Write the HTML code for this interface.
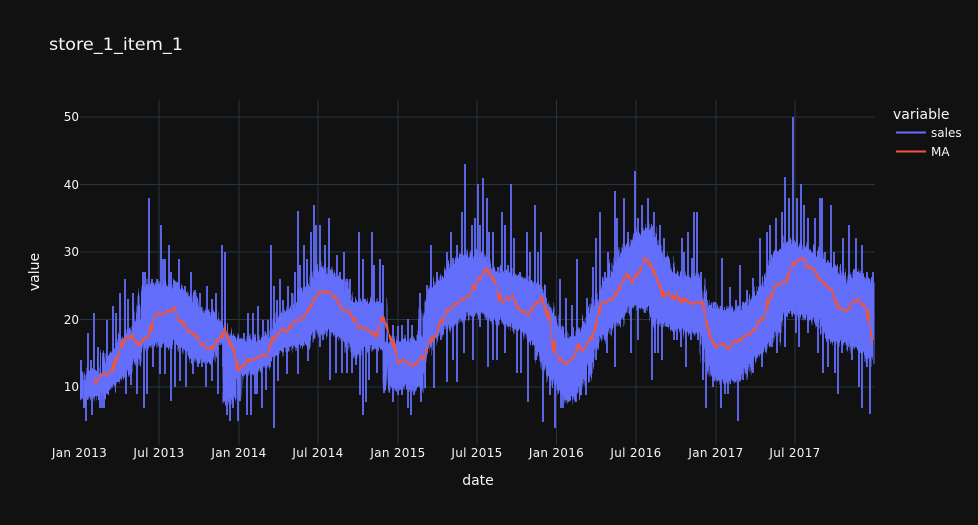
<!DOCTYPE html>
<html>
<head>
<meta charset="utf-8">
<title>store_1_item_1</title>
<style>
html,body{margin:0;padding:0;background:#111111;}
svg{display:block;}
text{font-family:"DejaVu Sans","Liberation Sans",sans-serif;fill:#f2f5fa;}
</style>
</head>
<body>
<svg width="978" height="525" viewBox="0 0 978 525" xmlns="http://www.w3.org/2000/svg">
<defs>
<clipPath id="plot"><rect x="80" y="100" width="795" height="345"/></clipPath>
<filter id="jag" filterUnits="userSpaceOnUse" x="0" y="0" width="978" height="525" color-interpolation-filters="sRGB">
<feTurbulence type="fractalNoise" baseFrequency="0.6 0.0005" numOctaves="2" seed="3" result="n1"/>
<feDisplacementMap in="SourceGraphic" in2="n1" scale="24" xChannelSelector="A" yChannelSelector="R" result="d1"/>
<feTurbulence type="fractalNoise" baseFrequency="0.45 0.0005" numOctaves="2" seed="11" result="n2"/>
<feDisplacementMap in="SourceGraphic" in2="n2" scale="24" xChannelSelector="A" yChannelSelector="G" result="d2"/>
<feMerge><feMergeNode in="d1"/><feMergeNode in="d2"/></feMerge>
</filter>
<filter id="ma" filterUnits="userSpaceOnUse" x="0" y="0" width="978" height="525" color-interpolation-filters="sRGB">
<feTurbulence type="fractalNoise" baseFrequency="0.35 0.0005" numOctaves="1" seed="5" result="n"/>
<feDisplacementMap in="SourceGraphic" in2="n" scale="7" xChannelSelector="A" yChannelSelector="R"/>
</filter>
</defs>
<rect width="978" height="525" fill="#111111"/>
<g stroke="#283442" stroke-width="1" fill="none">
<path d="M80 117H875M80 184.5H875M80 252H875M80 319.5H875M80 387H875"/>
<path d="M159 100V445M239 100V445M318 100V445M398 100V445M477 100V445M556.5 100V445M636 100V445M716 100V445M795 100V445"/>
</g>
<g clip-path="url(#plot)">
<polygon fill="#636efa" filter="url(#jag)" points="80,372 100,372 102,355 112,355 115,345 125,335 135,325 140,300 145,285 180,285 182,295 195,295 197,310 215,312 218,322 225,322 228,335 240,340 262,340 270,335 277,315 295,310 300,290 310,285 318,265 330,270 345,283 352,303 383,303 385,340 420,340 425,300 440,280 460,257 480,253 495,270 510,273 525,280 540,287 555,320 570,340 585,323 595,300 610,273 620,253 635,237 650,225 660,250 680,277 700,277 707,307 730,310 745,307 755,297 765,277 775,253 790,240 805,247 820,257 835,267 845,280 855,270 874,283 874,363 860,350 845,343 830,340 815,320 800,313 785,313 775,337 760,353 745,373 725,383 712,377 705,357 700,333 680,330 660,323 658,327 650,307 630,307 610,330 595,347 585,380 570,403 555,387 540,360 525,333 510,327 495,320 480,313 460,320 440,333 425,357 420,387 385,387 383,347 375,347 365,347 355,357 345,340 330,333 315,330 308,345 295,345 275,355 262,370 240,375 238,400 225,400 224,345 215,345 213,360 195,360 182,350 180,345 145,345 135,365 125,375 115,385 100,395 80,400"/>
</g>
<path fill="none" stroke="#636efa" stroke-width="1.8" d="M81 360V385M88 333V385M91 360V385M94 313V385M98 347V385M103 353V385M107 320V385M113 306V375M116 313V375M120 293V350M125 279V350M128 299V350M133 293V340M138 306V340M143 272V320M145 272V320M149 198V320M152 279V320M157 279V320M161 225V320M163 259V320M165 259V320M169 245V320M171 272V320M179 259V320M185 286V320M191 272V330M195 290V330M200 293V340M207 286V340M212 299V340M216 293V340M222 245V340M225 252V340M244 333V360M248 313V360M253 313V360M258 306V360M263 320V360M268 320V360M271 245V350M274 286V350M277 300V340M280 279V340M283 300V340M288 286V330M292 293V330M295 272V330M298 211V330M300 265V320M304 245V320M307 259V320M311 232V310M314 205V310M316 225V300M320 225V300M325 245V300M329 218V300M337 255V310M340 272V310M344 252V310M347 279V320M350 279V320M356 300V330M359 232V330M363 259V330M365 305V330M372 232V330M374 265V330M380 259V330M383 265V330M393 325V360M398 326V360M402 325V360M408 319V360M412 325V360M420 293V360M427 285V340M431 245V340M434 287V340M437 272V330M443 279V310M447 252V310M451 232V310M453 258V300M457 245V300M459 265V300M462 212V300M465 164V300M468 258V290M472 225V290M475 218V290M478 184V280M480 225V280M483 178V280M487 198V280M489 232V280M493 232V290M498 267V300M502 212V300M505 225V300M508 265V300M511 184V300M514 238V300M520 272V310M527 232V310M530 252V310M535 205V300M538 252V300M541 232V300M545 285V320M552 313V350M560 279V360M566 298V360M572 305V360M577 259V350M587 298V340M593 267V330M596 238V320M600 212V310M605 272V300M608 252V300M615 191V300M617 218V300M624 198V280M628 232V280M635 171V270M638 218V270M642 205V270M648 198V270M654 212V270M658 252V280M660 225V290M664 238V290M670 272V300M674 267V300M682 238V300M684 252V300M688 232V300M692 258V300M694 212V300M697 212V300M701 272V310M707 300V340M710 305V340M715 302V345M722 258V345M730 287V345M736 300V340M740 265V340M747 290V335M753 278V330M757 295V325M760 238V315M767 232V300M770 225V290M776 218V285M782 212V280M785 177V275M789 198V265M793 117V262M797 198V260M801 184V260M804 205V260M808 218V268M815 218V275M820 198V280M822 198V285M825 252V290M831 205V295M834 252V300M843 238V308M849 225V308M856 238V300M862 245V305M867 272V310M873 272V340"/>
<path fill="none" stroke="#636efa" stroke-width="1.8" d="M84 380V408M86 380V421M92 380V415M100 380V408M102 380V408M104 380V408M112 370V387M118 360V382M126 350V394M131 340V385M137 345V394M144 340V408M147 340V394M153 320V367M160 320V374M165 320V374M171 320V401M175 320V387M180 320V381M186 325V387M193 335V374M198 345V367M202 345V367M206 350V387M212 350V381M218 340V394M223 340V367M227 350V415M230 350V421M233 350V408M238 370V421M240 370V401M247 360V415M251 360V415M255 360V394M257 360V394M262 355V408M266 355V390M270 350V367M274 340V428M278 330V381M287 335V374M298 320V374M308 310V361M320 295V347M323 295V340M330 295V380M336 300V373M342 310V373M347 310V373M352 315V373M356 330V365M360 330V395M363 330V415M366 330V402M369 330V380M377 340V373M384 320V393M393 345V402M398 365V395M402 360V395M408 365V408M411 365V415M414 365V395M421 355V402M425 350V388M434 335V388M441 320V340M447 310V382M453 305V360M457 300V382M464 300V353M473 295V360M480 280V327M488 270V367M493 280V360M497 290V360M505 300V353M517 305V373M521 310V373M528 315V402M536 305V360M543 300V422M550 320V395M555 350V428M561 360V408M563 360V408M572 360V395M576 355V402M581 350V395M586 345V395M589 340V382M596 330V360M607 300V353M615 299V367M631 283V353M638 270V340M645 262V313M652 262V380M655 270V353M658 283V353M662 298V360M667 293V327M674 299V340M677 295V340M681 303V347M686 300V367M691 303V340M698 303V340M703 303V380M706 320V408M713 345V387M721 345V408M725 345V394M728 348V394M738 343V421M743 337V380M748 335V360M753 330V373M762 320V367M772 295V347M777 285V353M785 281V347M796 262V333M799 260V347M808 268V333M818 278V353M823 285V373M828 290V367M835 295V373M838 307V394M842 308V353M848 310V347M852 305V360M859 299V387M862 302V408M867 310V367M870 327V414"/>
<g clip-path="url(#plot)">
<polyline fill="none" stroke="#ef553b" stroke-width="2.4" stroke-linejoin="round" filter="url(#ma)" points="93,384 99,377 108,373 113,370 116,358 120,350 125,338 132,335 134,340 139,346 143,339 148,337 153,320 157,314 165,313 174,308 177,317 183,322 188,332 193,333 200,342 207,348 212,349 217,340 222,337 225,327 230,343 233,348 238,371 243,367 249,359 257,358 267,355 273,338 283,329 287,332 293,322 300,320 307,312 315,298 320,292 330,292 337,300 342,309 350,312 358,328 365,328 376,337 383,318 392,340 398,364 403,360 414,366 423,357 433,337 437,333 440,323 448,310 458,302 470,295 476,283 480,278 487,268 495,283 501,302 513,296 518,308 528,315 533,307 542,297 548,317 555,353 565,364 575,356 578,345 582,350 592,338 602,303 613,299 622,282 627,274 632,283 646,259 650,263 660,287 663,298 667,293 673,299 676,293 681,303 684,298 688,303 702,303 705,317 710,337 715,347 722,343 729,348 733,342 738,343 743,337 748,335 755,330 758,323 766,315 768,302 775,287 786,281 788,273 795,262 805,258 808,268 813,268 820,280 833,292 838,307 847,310 852,303 858,299 867,310 870,327 873,342"/>
</g>
<text x="49" y="50" font-size="17" textLength="134" lengthAdjust="spacingAndGlyphs">store_1_item_1</text>
<g font-size="12" text-anchor="end">
<text x="79" y="121">50</text>
<text x="79" y="189">40</text>
<text x="79" y="256">30</text>
<text x="79" y="324">20</text>
<text x="79" y="391">10</text>
</g>
<g font-size="12" text-anchor="middle" letter-spacing="0.3">
<text x="79.5" y="457">Jan 2013</text>
<text x="159" y="457">Jul 2013</text>
<text x="239" y="457">Jan 2014</text>
<text x="318" y="457">Jul 2014</text>
<text x="398" y="457">Jan 2015</text>
<text x="477" y="457">Jul 2015</text>
<text x="556.5" y="457">Jan 2016</text>
<text x="636" y="457">Jul 2016</text>
<text x="716" y="457">Jan 2017</text>
<text x="795" y="457">Jul 2017</text>
</g>
<text x="478" y="485" font-size="14" text-anchor="middle">date</text>
<text transform="translate(39 272) rotate(-90)" font-size="14" text-anchor="middle">value</text>
<text x="893" y="119" font-size="14">variable</text>
<line x1="896" y1="132.5" x2="926" y2="132.5" stroke="#636efa" stroke-width="2"/>
<line x1="896" y1="151.5" x2="926" y2="151.5" stroke="#ef553b" stroke-width="2"/>
<text x="931" y="137" font-size="12">sales</text>
<text x="931" y="156" font-size="12">MA</text>
</svg>
</body>
</html>
